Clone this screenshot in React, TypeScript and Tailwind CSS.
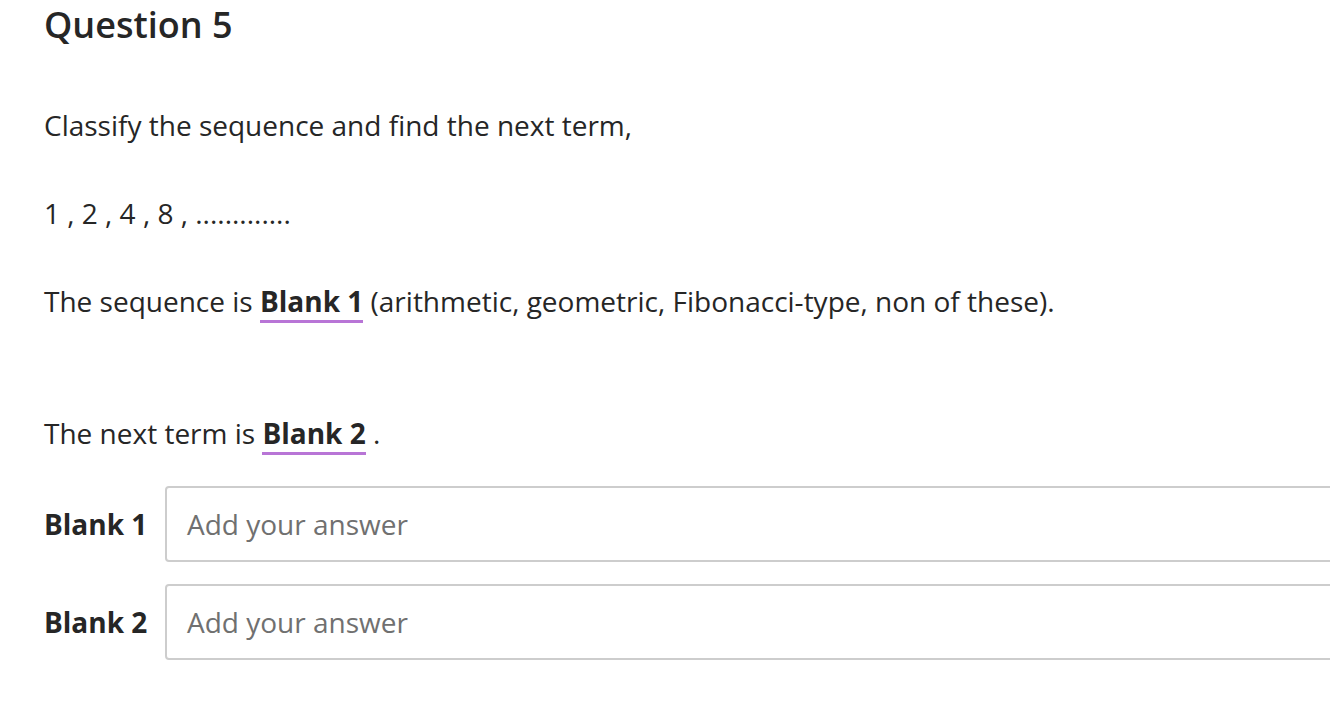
import React from 'react';

const Blank: React.FC<{ label: string }> = ({ label }) => (
  <span className="font-bold border-b-[3px] border-[#b875d6]">{label}</span>
);

const App: React.FC = () => {
  const answers = ['Blank 1', 'Blank 2'];

  return (
    <div className="min-h-screen bg-white text-[#262626] font-['Open_Sans',sans-serif] pl-[44px] overflow-hidden">
      <h1 className="text-[36px] font-semibold leading-none pt-[7px] mb-[68px]">Question 5</h1>

      <p className="text-[28px] leading-none mb-[60px]">Classify the sequence and find the next term,</p>

      <p className="text-[28px] leading-none mb-[60px]">1 , 2 , 4 , 8 , .............</p>

      <p className="text-[28px] leading-none mb-[104px]">
        The sequence is <Blank label="Blank 1" /> (arithmetic, geometric, Fibonacci-type, non of these).
      </p>

      <p className="text-[28px] leading-none mb-[39px]">
        The next term is <Blank label="Blank 2" /> .
      </p>

      <div className="flex flex-col gap-[22px]">
        {answers.map((a) => (
          <div key={a} className="flex items-center">
            <span className="w-[121px] shrink-0 text-[28px] font-bold">{a}</span>
            <div className="flex-1 -mr-[10px] h-[76px] border-2 border-[#cdcdcd] rounded-[4px] flex items-center px-[20px]">
              <span className="text-[28px] text-[#707070]">Add your answer</span>
            </div>
          </div>
        ))}
      </div>
    </div>
  );
};

export default App;
